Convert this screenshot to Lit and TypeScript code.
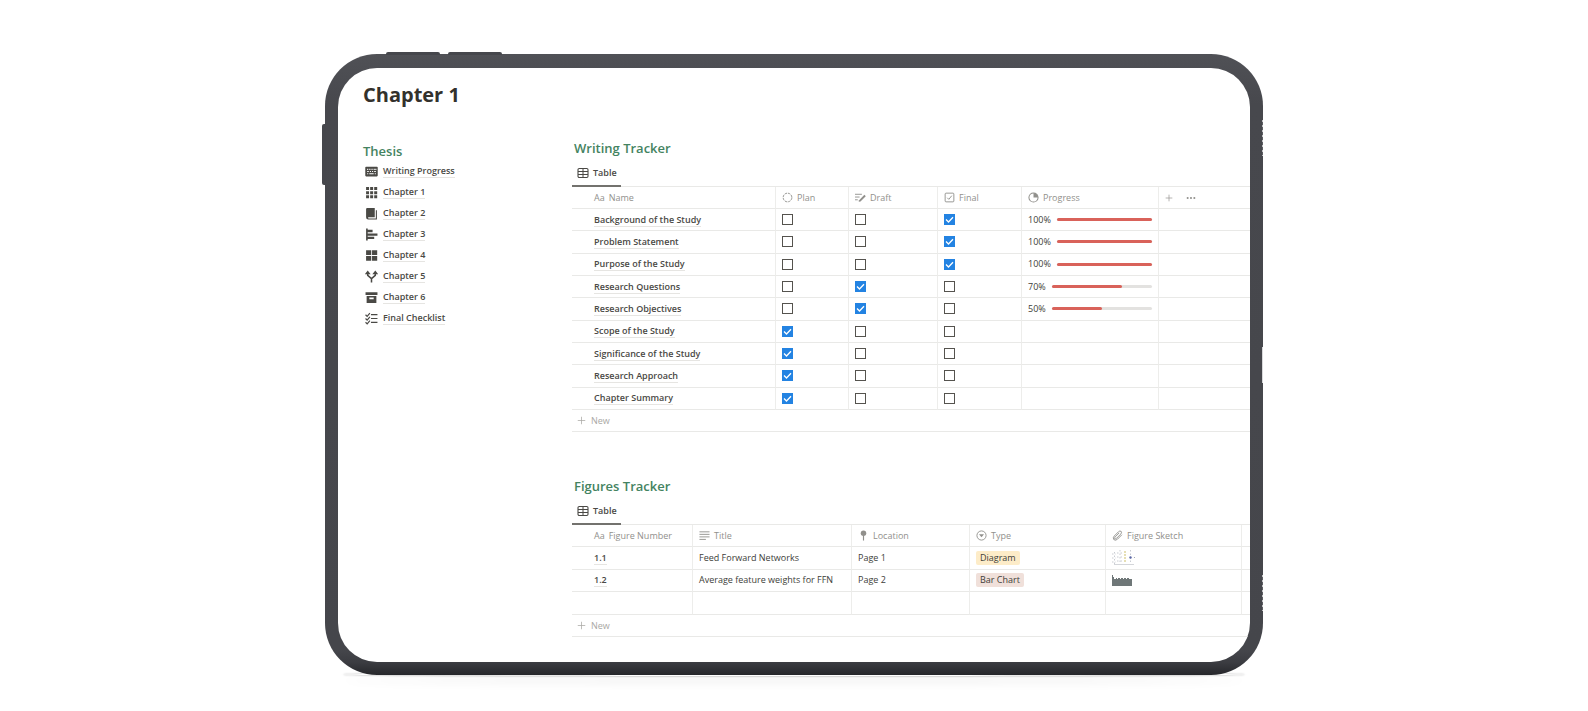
import { LitElement, html, css, svg, nothing } from "lit";
import { customElement } from "lit/decorators.js";

const icons: Record<string, unknown> = {
  keyboard: svg`<path fill="currentColor" fill-rule="evenodd" d="M2 3h20q1.500 0 1.500 1.500v15q0 1.500-1.500 1.500H2q-1.500 0-1.500-1.500v-15Q.5 3 2 3zM4 7v2h2V7zm4 0v2h2V7zm4 0v2h2V7zm4 0v2h2V7zm3 0v2h2V7zM4 11v2h3v-2zm5 0v2h2v-2zm4 0v2h2v-2zm4 0v2h3v-2zM4 15v2h2v-2zm4 0v2h8v-2zm10 0v2h2v-2z"/>`,
  grid: svg`<path fill="currentColor" d="M2 2h5.500v5.500H2zM9.500 2H15v5.500H9.500zM17 2h5.500v5.500H17zM2 9.500h5.500V15H2zM9.500 9.500H15V15H9.500zM17 9.500h5.500V15H17zM2 17h5.500v5.500H2zM9.500 17H15v5.500H9.500zM17 17h5.500v5.500H17z"/>`,
  book: svg`<path fill="currentColor" d="M4 2h14v17H7q-1.500 0-1.500 1 0 1 1.500 1H20V6h2v17H6q-4 0-4-4V4q0-2 2-2z"/>`,
  bars: svg`<path fill="currentColor" d="M2 1h3v22H2zM5 3h9v5H5zM5 10h18v4.500H5zM5 16h12v4.500H5z"/>`,
  blocks: svg`<path fill="currentColor" d="M2 2.500h9.500v8.500H2zM13 2.500h9.500v8.500H13zM2 13h9.500v8.500H2zM13 13h9.500v8.500H13z"/>`,
  fork: svg`<path fill="none" stroke="currentColor" stroke-width="2.800" d="M12 23v-7L5 10V4M12 16l7-6V4"/><path fill="currentColor" d="M-.5 8L5 1l5.500 7zM13.500 8L19 1l5.500 7z"/>`,
  archive: svg`<path fill="currentColor" fill-rule="evenodd" d="M1 2.500h22v5H1zM3 9h18v13H3zM8 12v3h8v-3z"/>`,
  checklist: svg`<path fill="none" stroke="currentColor" stroke-width="2.200" d="M1 5l3 3 5-6M1 12l3 3 5-6M1 19l3 3 5-6M11 5h12M11 12h12M11 19h12"/>`,
  table: svg`<rect x="2" y="3" width="20" height="18" rx="2.500" fill="none" stroke="currentColor" stroke-width="2.200"/><path fill="none" stroke="currentColor" stroke-width="2" d="M2 9h20M2 15h20M12 3v18"/>`,
  dashed: svg`<circle cx="12" cy="12" r="9.500" fill="none" stroke="currentColor" stroke-width="2" stroke-dasharray="5.500 1.960"/>`,
  draft: svg`<path fill="none" stroke="currentColor" stroke-width="2" d="M0 5h15M0 11h10M0 17h6"/><path fill="currentColor" d="M9 18L20.500 6l3 3L12 20.500l-4 1z"/>`,
  checked: svg`<rect x="2.500" y="2.500" width="19" height="19" rx="2" fill="none" stroke="currentColor" stroke-width="2"/><path fill="none" stroke="currentColor" stroke-width="2" d="M7 12.500l3.500 3.500L17 8"/>`,
  pie: svg`<circle cx="12" cy="12" r="10" fill="none" stroke="currentColor" stroke-width="2.200"/><path fill="currentColor" d="M12 2a10 10 0 0 1 10 10H12z"/>`,
  lines: svg`<path fill="none" stroke="currentColor" stroke-width="2" d="M1 4h22M1 9.500h22M1 15h22M1 20.500h14"/>`,
  pin: svg`<circle cx="12" cy="7" r="6" fill="currentColor"/><path stroke="currentColor" stroke-width="2.500" d="M12 12v11"/>`,
  select: svg`<circle cx="12" cy="12" r="10" fill="none" stroke="currentColor" stroke-width="2"/><path fill="currentColor" d="M6.500 9.500h11L12 16z"/>`,
  clip: svg`<path fill="none" stroke="currentColor" stroke-width="2" stroke-linecap="round" d="M21 11l-9 9q-4 4-8 1-3-4 1-8l9-9q3-3 6-1 2 3-1 6l-9 9q-2 2-4 1-1-2 1-4l8-8"/>`,
  plus: svg`<path fill="none" stroke="currentColor" stroke-width="2" d="M12 2v20M2 12h20"/>`,
  dots: svg`<g fill="currentColor"><circle cx="4" cy="12" r="2.500"/><circle cx="12" cy="12" r="2.500"/><circle cx="20" cy="12" r="2.500"/></g>`,
};

const icon = (name: string, cls = "") =>
  html`<svg class="icon ${cls}" viewBox="0 0 24 24" aria-hidden="true">${icons[name]}</svg>`;

const chapters: [string, string][] = [
  ["keyboard", "Writing Progress"],
  ["grid", "Chapter 1"],
  ["book", "Chapter 2"],
  ["bars", "Chapter 3"],
  ["blocks", "Chapter 4"],
  ["fork", "Chapter 5"],
  ["archive", "Chapter 6"],
  ["checklist", "Final Checklist"],
];

const stages = ["Plan", "Draft", "Final"];

const sections: { name: string; stage: string; progress?: number }[] = [
  { name: "Background of the Study", stage: "Final", progress: 100 },
  { name: "Problem Statement", stage: "Final", progress: 100 },
  { name: "Purpose of the Study", stage: "Final", progress: 100 },
  { name: "Research Questions", stage: "Draft", progress: 70 },
  { name: "Research Objectives", stage: "Draft", progress: 50 },
  { name: "Scope of the Study", stage: "Plan" },
  { name: "Significance of the Study", stage: "Plan" },
  { name: "Research Approach", stage: "Plan" },
  { name: "Chapter Summary", stage: "Plan" },
];

const networkSketch = html`<svg class="sketch" viewBox="0 0 24 16" aria-hidden="true">
  <g fill="none" stroke="#c9ccd2" stroke-width="1" stroke-dasharray="1.500 2">
    <path d="M2.500 2v13M8 0v15M18.500 0v15" /><path d="M0 4h4M0 8h4M0 12h4M5 3h5M5 7h5M5 11h5" />
  </g>
  <path d="M13 1v12" stroke="#e6dfb4" stroke-width="2" stroke-dasharray="2 1" />
  <path d="M2 14.500h20" stroke="#d4d6da" />
  <circle cx="18.500" cy="7.500" r="1.200" fill="#5b67a5" /><circle cx="22.500" cy="7.500" r=".6" fill="#9aa0a8" />
</svg>`;

const chartSketch = html`<svg class="sketch" viewBox="0 0 24 16" aria-hidden="true">
  <path fill="#6f7778" d="M0 3h1v2h1v2h2V6h1v1h1V6h2v1h1V6h2v1h1V6h2v1h1V6h2v1h3v7H0z" />
</svg>`;

const figures = [
  { number: "1.1", title: "Feed Forward Networks", location: "Page 1", type: "Diagram", tone: "yellow", sketch: networkSketch },
  { number: "1.2", title: "Average feature weights for FFN", location: "Page 2", type: "Bar Chart", tone: "brown", sketch: chartSketch },
];

@customElement("app-root")
export class AppRoot extends LitElement {
  static styles = css`
    :host {
      display: block;
      font-family: "Open Sans", "Noto Sans", sans-serif;
      font-size: 9px;
      line-height: 12px;
      color: #403e39;
      background: #fff;
    }
    * { box-sizing: border-box; }
    .page {
      display: flex;
      justify-content: center;
      align-items: flex-start;
      min-height: 100vh;
      padding: 54px 24px 36px;
      isolation: isolate;
    }
    .device {
      position: relative;
      width: 100%;
      max-width: 938px;
      padding: 14px 13px 13px;
      border-radius: 52px;
      background: linear-gradient(#505156, #47484d 8%, #45464b 96%, #3b3c41 98%, #26272b);
    }
    .shadow {
      position: absolute;
      left: 18px;
      right: 18px;
      bottom: -1px;
      height: 3px;
      border-radius: 50%;
      box-shadow: 0 0 2px rgba(0, 0, 0, .5), 0 6px 10px rgba(0, 0, 0, .12);
      z-index: -1;
    }
    .key { position: absolute; background: #46474c; }
    .key.up { top: -2px; left: 61px; width: 54px; height: 3px; border-radius: 2px 2px 0 0; }
    .key.down { top: -2px; left: 123px; width: 54px; height: 3px; border-radius: 2px 2px 0 0; }
    .key.power { top: 70px; left: -3px; width: 4px; height: 61px; border-radius: 2px 0 0 2px; }
    .grille, .connector { position: absolute; right: 0; width: 1px; height: 36px; }
    .grille { background: repeating-linear-gradient(#c4c4c6 0 2px, #5c5d62 2px 5px); }
    .grille.top { top: 66px; }
    .grille.bottom { bottom: 64px; }
    .connector { top: 293px; background: #d8d8da; }
    .screen {
      overflow: hidden;
      padding: 13px 0 25px 25px;
      border-radius: 39px;
      background: #fff;
    }
    h1 { margin: 0; font-size: 20px; line-height: 28px; font-weight: 700; color: #33312c; }
    h2 { margin: 0; font-size: 13px; line-height: 20px; font-weight: 600; color: #448361; }
    .columns {
      display: grid;
      grid-template-columns: 209px minmax(0, 1fr);
      margin-top: 29px;
    }
    nav { padding-top: 3px; }
    .chapters { margin: 0; padding: 0; list-style: none; }
    .chapters li { display: flex; align-items: center; height: 21px; padding-left: 2px; gap: 5px; color: #4a4945; }
    .icon { display: block; flex: none; width: 11px; height: 11px; }
    .icon.large { width: 13px; height: 13px; }
    a { color: #4a4945; text-decoration: none; border-bottom: 1px solid #e6e5e2; font-weight: 600; }
    .tracker { margin-bottom: 44px; }
    .tracker:last-child { margin-bottom: 0; }
    .tracker h2 { padding-left: 2px; }
    .tabs { display: flex; height: 29px; border-bottom: 1px solid #e9e9e7; }
    button {
      display: flex;
      align-items: center;
      margin: 0;
      padding: 0;
      border: 0;
      background: none;
      color: inherit;
      font: inherit;
    }
    .tab { gap: 4px; height: 29px; padding: 2px 4px 0 5px; border-bottom: 2px solid #73726e; color: #4a4945; font-weight: 600; }
    .tab .icon { width: 12px; height: 12px; }
    table { width: 100%; border-collapse: separate; border-spacing: 0; table-layout: fixed; }
    .writing { height: 223px; }
    .figures { width: 710px; height: 90px; }
    th, td {
      height: 22px;
      padding: 0 0 0 6px;
      border-right: 1px solid #ededeb;
      border-bottom: 1px solid #e9e9e7;
      text-align: left;
      vertical-align: middle;
      font-weight: 400;
      white-space: nowrap;
    }
    th:first-child, td:first-child { padding-left: 22px; }
    th:last-child, td:last-child { border-right: 0; }
    th { color: #91908c; }
    .head { display: flex; align-items: center; gap: 4px; }
    .actions { display: flex; align-items: center; gap: 13px; color: #91908c; }
    .actions .icon { width: 8px; height: 8px; }
    .actions .dots { width: 10px; height: 10px; }
    input {
      appearance: none;
      display: block;
      width: 11px;
      height: 11px;
      margin: 0;
      border: 1px solid #55534e;
      background: #fff;
    }
    input:checked {
      border-color: #2383e2;
      background: #2383e2 url("data:image/svg+xml,%3Csvg xmlns='http://www.w3.org/2000/svg' viewBox='0 0 9 9'%3E%3Cpath d='M1 4.500l2.500 2.500L8 2.200' fill='none' stroke='white' stroke-width='1.300'/%3E%3C/svg%3E");
    }
    .progress { display: flex; align-items: center; gap: 6px; padding-right: 6px; }
    .track { flex: 1; height: 3px; border-radius: 2px; background: #e3e2e0; }
    .fill { height: 3px; border-radius: 2px; background: #d9625a; }
    .new { gap: 5px; width: 100%; height: 22px; padding-left: 5px; border-bottom: 1px solid #e9e9e7; color: #a9a8a4; }
    .new .icon { width: 9px; height: 9px; }
    .tag { display: inline-block; height: 14px; padding: 1px 4px; border-radius: 2px; vertical-align: middle; }
    .yellow { background: #fdecc8; }
    .brown { background: #f0e0da; }
    .sketch { display: block; width: 24px; height: 16px; }
  `;

  private heading(name: string, label: string) {
    return html`<span class="head">${name === "aa" ? html`<span aria-hidden="true">Aa</span>` : icon(name)}${label}</span>`;
  }

  private tabs() {
    return html`<div class="tabs"><button class="tab" type="button">${icon("table")}Table</button></div>`;
  }

  private newRow() {
    return html`<button class="new" type="button">${icon("plus")}New</button>`;
  }

  private progress(value: number) {
    return html`<div class="progress">
      <span>${value}%</span>
      <div class="track"><div class="fill" style="width:${value}%"></div></div>
    </div>`;
  }

  render() {
    return html`
      <div class="page">
        <div class="device">
          <span class="shadow"></span>
          <span class="key up"></span><span class="key down"></span><span class="key power"></span>
          <span class="grille top"></span><span class="connector"></span><span class="grille bottom"></span>
          <main class="screen">
            <h1>Chapter 1</h1>
            <div class="columns">
              <nav aria-label="Thesis">
                <h2>Thesis</h2>
                <ul class="chapters">
                  ${chapters.map(([glyph, label]) => html`<li>${icon(glyph, "large")}<a href="#">${label}</a></li>`)}
                </ul>
              </nav>
              <div>
                <section class="tracker">
                  <h2>Writing Tracker</h2>
                  ${this.tabs()}
                  <table class="writing">
                    <colgroup><col style="width:204px" /><col style="width:73px" /><col style="width:89px" /><col style="width:84px" /><col style="width:137px" /><col /></colgroup>
                    <thead>
                      <tr>
                        <th>${this.heading("aa", "Name")}</th>
                        <th>${this.heading("dashed", "Plan")}</th>
                        <th>${this.heading("draft", "Draft")}</th>
                        <th>${this.heading("checked", "Final")}</th>
                        <th>${this.heading("pie", "Progress")}</th>
                        <th>
                          <div class="actions">
                            <button type="button" aria-label="Add property">${icon("plus")}</button>
                            <button type="button" aria-label="More">${icon("dots", "dots")}</button>
                          </div>
                        </th>
                      </tr>
                    </thead>
                    <tbody>
                      ${sections.map((row) => html`<tr>
                        <td><a href="#">${row.name}</a></td>
                        ${stages.map((stage) => html`<td><input type="checkbox" aria-label="${row.name}: ${stage}" .checked=${row.stage === stage} /></td>`)}
                        <td>${row.progress ? this.progress(row.progress) : nothing}</td>
                        <td></td>
                      </tr>`)}
                    </tbody>
                  </table>
                  ${this.newRow()}
                </section>
                <section class="tracker">
                  <h2>Figures Tracker</h2>
                  ${this.tabs()}
                  <table class="figures">
                    <colgroup><col style="width:121px" /><col style="width:159px" /><col style="width:118px" /><col style="width:136px" /><col style="width:136px" /><col /></colgroup>
                    <thead>
                      <tr>
                        <th>${this.heading("aa", "Figure Number")}</th>
                        <th>${this.heading("lines", "Title")}</th>
                        <th>${this.heading("pin", "Location")}</th>
                        <th>${this.heading("select", "Type")}</th>
                        <th>${this.heading("clip", "Figure Sketch")}</th>
                        <th></th>
                      </tr>
                    </thead>
                    <tbody>
                      ${figures.map((row) => html`<tr>
                        <td><a href="#">${row.number}</a></td>
                        <td>${row.title}</td>
                        <td>${row.location}</td>
                        <td><span class="tag ${row.tone}">${row.type}</span></td>
                        <td>${row.sketch}</td>
                        <td></td>
                      </tr>`)}
                      <tr><td></td><td></td><td></td><td></td><td></td><td></td></tr>
                    </tbody>
                  </table>
                  ${this.newRow()}
                </section>
              </div>
            </div>
          </main>
        </div>
      </div>
    `;
  }
}
